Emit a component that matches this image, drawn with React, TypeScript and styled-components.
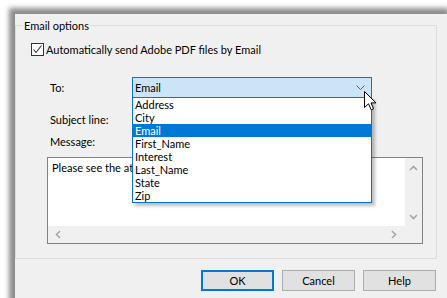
import React from 'react';
import styled, { createGlobalStyle } from 'styled-components';

const fields = ['Address', 'City', 'Email', 'First_Name', 'Interest', 'Last_Name', 'State', 'Zip'];

export default function App(): JSX.Element {
  return (
    <Page>
      <GlobalStyle />
      <Dialog>
        <Group>
          <Legend>Email options</Legend>
          <CheckRow>
            <CheckBox>
              <svg width="11" height="11" viewBox="0 0 11 11">
                <path d="M1.5 5.5 L4 8.5 L9.5 1.5" fill="none" stroke="#333" strokeWidth="1.1" />
              </svg>
            </CheckBox>
            <span>Automatically send Adobe PDF files by Email</span>
          </CheckRow>
          <FieldRow $top={21}>
            <Label $shift={3}>To:</Label>
            <Combo>
              <span>Email</span>
              <svg width="9" height="5" viewBox="0 0 9 5">
                <path d="M0.5 0.5 L4.5 4.5 L8.5 0.5" fill="none" stroke="#606060" strokeWidth="1" />
              </svg>
            </Combo>
          </FieldRow>
          <FieldRow $top={11}>
            <Label $shift={3}>Subject line:</Label>
            <SubjectInput />
          </FieldRow>
          <FieldRow $top={4}>
            <Label $shift={0}>Message:</Label>
          </FieldRow>
          <MessageBox>
            <MessageText>Please see the attached file.</MessageText>
            <VScroll>
              <Arrow d="M1 5 L4.5 1.5 L8 5" />
              <Arrow d="M1 1 L4.5 4.5 L8 1" />
            </VScroll>
            <HScroll>
              <Arrow d="M5 1 L1.5 4.5 L5 8" $h />
              <Arrow d="M1 1 L4.5 4.5 L1 8" $h />
            </HScroll>
            <Corner />
          </MessageBox>
        </Group>
        <Buttons>
          <Button $primary>OK</Button>
          <Button>Cancel</Button>
          <Button>Help</Button>
        </Buttons>
        <DropList>
          {fields.map((f) => (
            <Item key={f} $selected={f === 'Email'}>
              {f}
            </Item>
          ))}
        </DropList>
      </Dialog>
      <Cursor width="13" height="20" viewBox="0 0 13 20">
        <path
          d="M0.5 0.5 L0.5 16.5 L4.5 12.8 L7.2 18.8 L9.6 17.8 L7 11.9 L12 11.9 Z"
          fill="#fff"
          stroke="#000"
          strokeWidth="1"
          strokeLinejoin="miter"
        />
      </Cursor>
    </Page>
  );
}

function Arrow({ d, $h }: { d: string; $h?: boolean }): JSX.Element {
  return (
    <svg width={$h ? 6 : 9} height={$h ? 9 : 6} viewBox={$h ? '0 0 6 9' : '0 0 9 6'}>
      <path d={d} fill="none" stroke="#a6a6a6" strokeWidth="1.6" />
    </svg>
  );
}

const GlobalStyle = createGlobalStyle`
  html, body {
    margin: 0;
    padding: 0;
    background: #fff;
    overflow: hidden;
  }
  body {
    font-family: Lato, "Noto Sans", "Liberation Sans", sans-serif;
    font-size: 11px;
    color: #000;
  }
`;

const Page = styled.div`
  position: relative;
  width: 447px;
  height: 298px;
  overflow: hidden;
  padding: 14px 0 0 15px;
  box-sizing: border-box;
`;

const Dialog = styled.div`
  position: relative;
  width: 440px;
  height: 300px;
  background: #f0f0f0;
  box-shadow: -6px -6px 5px rgba(0, 0, 0, 0.45);
  display: flex;
  flex-direction: column;
`;

const Group = styled.div`
  margin-top: 11px;
  width: 422px;
  height: 234px;
  box-sizing: border-box;
  border: 1px solid #dcdcdc;
  display: flex;
  flex-direction: column;
`;

const Legend = styled.div`
  margin: -8px 0 0 7px;
  padding: 0 1px;
  line-height: 15px;
  background: #f0f0f0;
  align-self: flex-start;
`;

const CheckRow = styled.div`
  margin: 10px 0 0 15px;
  display: flex;
  align-items: center;
  gap: 2px;
  height: 13px;
  line-height: 13px;
`;

const CheckBox = styled.div`
  width: 13px;
  height: 13px;
  box-sizing: border-box;
  border: 1px solid #333;
  background: #fff;
  display: flex;
  align-items: center;
  justify-content: center;
`;

const FieldRow = styled.div<{ $top: number }>`
  margin: ${(p) => p.$top}px 0 0 34px;
  display: flex;
  align-items: flex-start;
`;

const Label = styled.div<{ $shift: number }>`
  width: 82px;
  padding-top: ${(p) => p.$shift}px;
  line-height: 15px;
`;

const Combo = styled.div`
  width: 240px;
  height: 21px;
  box-sizing: border-box;
  border: 1px solid #0078d7;
  background: #cce4f7;
  display: flex;
  align-items: center;
  justify-content: space-between;
  padding: 0 6px 0 2px;
`;

const SubjectInput = styled.div`
  width: 240px;
  height: 21px;
  box-sizing: border-box;
  border: 1px solid #7a7a7a;
  background: #fff;
`;

const MessageBox = styled.div`
  margin: 8px 0 0 31px;
  width: 376px;
  height: 87px;
  box-sizing: border-box;
  border: 1px solid #828282;
  background: #fff;
  display: grid;
  grid-template-columns: 1fr 17px;
  grid-template-rows: 1fr 17px;
`;

const MessageText = styled.div`
  padding: 2px 0 0 4px;
  line-height: 15px;
  white-space: nowrap;
  overflow: hidden;
`;

const VScroll = styled.div`
  background: #f0f0f0;
  display: flex;
  flex-direction: column;
  align-items: center;
  justify-content: space-between;
  padding: 7px 0 6px;
`;

const HScroll = styled.div`
  background: #f0f0f0;
  display: flex;
  align-items: center;
  justify-content: space-between;
  padding: 0 8px 0 7px;
`;

const Corner = styled.div`
  background: #f0f0f0;
`;

const Buttons = styled.div`
  display: flex;
  gap: 8px;
  margin: 11px 0 0 186px;
`;

const Button = styled.div<{ $primary?: boolean }>`
  width: 73px;
  height: 21px;
  box-sizing: border-box;
  background: #e1e1e1;
  border: ${(p) => (p.$primary ? '2px solid #0078d7' : '1px solid #adadad')};
  display: flex;
  align-items: center;
  justify-content: center;
`;

const DropList = styled.div`
  position: absolute;
  left: 117px;
  top: 83px;
  width: 240px;
  box-sizing: border-box;
  border: 1px solid #0078d7;
  background: #fff;
  box-shadow: 3px 3px 3px rgba(0, 0, 0, 0.25);
`;

const Item = styled.div<{ $selected: boolean }>`
  height: 13px;
  line-height: 13px;
  padding-left: 2px;
  background: ${(p) => (p.$selected ? '#0078d7' : '#fff')};
  color: ${(p) => (p.$selected ? '#fff' : '#000')};
`;

const Cursor = styled.svg`
  position: absolute;
  left: 364px;
  top: 91px;
`;
